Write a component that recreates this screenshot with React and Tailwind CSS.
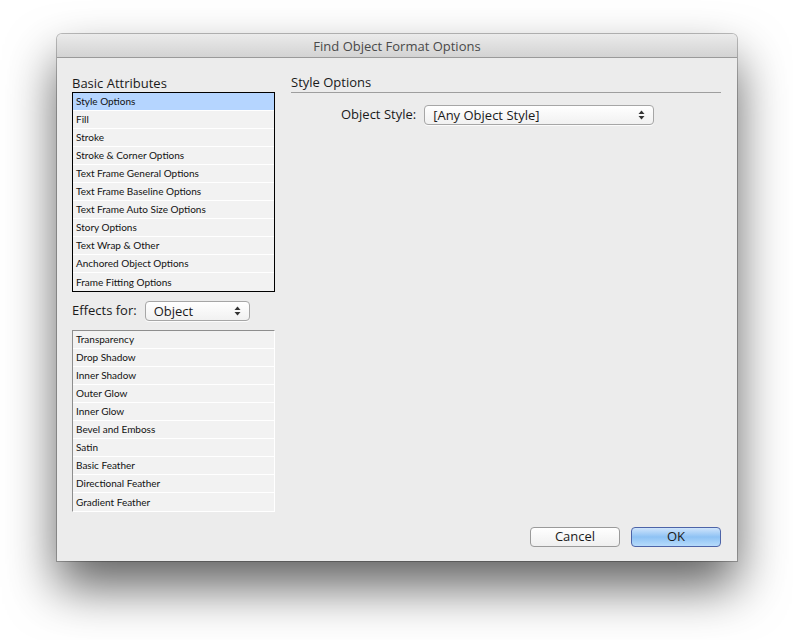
import React from "react";

const basic = [
  "Style Options",
  "Fill",
  "Stroke",
  "Stroke & Corner Options",
  "Text Frame General Options",
  "Text Frame Baseline Options",
  "Text Frame Auto Size Options",
  "Story Options",
  "Text Wrap & Other",
  "Anchored Object Options",
  "Frame Fitting Options",
];

const effects = [
  "Transparency",
  "Drop Shadow",
  "Inner Shadow",
  "Outer Glow",
  "Inner Glow",
  "Bevel and Emboss",
  "Satin",
  "Basic Feather",
  "Directional Feather",
  "Gradient Feather",
];

const big = { fontFamily: "'Open Sans', 'Liberation Sans', sans-serif" };

function Arrows() {
  return (
    <svg width="7" height="10" viewBox="0 0 7 10" className="shrink-0">
      <path d="M3.5 0.5 L6.5 4 L0.5 4 Z" fill="#333" />
      <path d="M3.5 9.5 L6.5 6 L0.5 6 Z" fill="#333" />
    </svg>
  );
}

function Popup({ label, className }) {
  return (
    <div
      className={
        "flex items-center justify-between h-[20px] rounded-[4px] border border-[#a6a6a6] bg-gradient-to-b from-[#ffffff] to-[#f1f1f1] pl-[8px] pr-[8px] text-[13px] text-[#1a1a1a] shadow-[0_1px_0_rgba(255,255,255,0.8)] " +
        className
      }
    >
      <span className="leading-none" style={big}>{label}</span>
      <Arrows />
    </div>
  );
}

export default function App() {
  return (
    <div
      className="w-[793px] h-[640px] bg-white pl-[57px] pt-[34px]"
      style={{ fontFamily: "Lato, 'Liberation Sans', sans-serif" }}
    >
      <div className="w-[680px] h-[527px] flex flex-col rounded-t-[5px] shadow-[0_26px_50px_rgba(0,0,0,0.62),0_0_0_1px_rgba(0,0,0,0.25)] bg-[#ececec]">
        <div
          className="h-[24px] shrink-0 rounded-t-[5px] bg-gradient-to-b from-[#ebebeb] to-[#d3d3d3] border-b border-[#9a9a9a] flex items-center justify-center text-[13px] text-[#4a4a4a] pt-[2px]"
          style={big}
        >
          Find Object Format Options
        </div>
        <div className="flex-1 flex flex-col pl-[15px] pr-[16px] pb-[14px]">
          <div className="flex flex-1 gap-[16px]">
            {/* Left column */}
            <div className="w-[203px] flex flex-col">
              <div className="h-[34px] flex items-end text-[13px] leading-[18px] text-[#1a1a1a]" style={big}>
                Basic Attributes
              </div>
              <div className="border border-black bg-[#f2f2f2]">
                {basic.map((t, i) => (
                  <div
                    key={t}
                    className={
                      "h-[18px] flex items-center pl-[3px] text-[10px] text-[#111] " +
                      (i === 0 ? "bg-[#b5d5ff] " : "") +
                      (i < basic.length - 1 ? "border-b border-white" : "")
                    }
                  >
                    {t}
                  </div>
                ))}
              </div>
              <div className="flex items-center gap-[8px] mt-[9px] text-[13px] text-[#1a1a1a]">
                <span style={big}>Effects for:</span>
                <Popup label="Object" className="w-[105px]" />
              </div>
              <div className="mt-[9px] border-t border-l border-[#8e8e8e] border-r border-r-white border-b border-b-white bg-[#f2f2f2]">
                {effects.map((t, i) => (
                  <div
                    key={t}
                    className={
                      "h-[18px] flex items-center pl-[3px] text-[10px] text-[#111] " +
                      (i < effects.length - 1 ? "border-b border-white" : "")
                    }
                  >
                    {t}
                  </div>
                ))}
              </div>
            </div>
            {/* Right column */}
            <div className="flex-1 flex flex-col">
              <div
                className="h-[35px] flex items-end pb-[1px] text-[13px] leading-[18px] text-[#1a1a1a] border-b border-[#9e9e9e]"
                style={big}
              >
                Style Options
              </div>
              <div className="flex items-center mt-[12px] pl-[50px] gap-[8px] text-[13px] text-[#1a1a1a]">
                <span style={big}>Object Style:</span>
                <Popup label="[Any Object Style]" className="w-[230px]" />
              </div>
            </div>
          </div>
          <div className="flex justify-end gap-[11px]">
            <div
              className="w-[90px] h-[20px] rounded-[4px] border border-[#9a9a9a] bg-gradient-to-b from-[#ffffff] to-[#efefef] flex items-center justify-center text-[13px] text-[#1a1a1a]"
              style={big}
            >
              Cancel
            </div>
            <div
              className="w-[90px] h-[20px] rounded-[4px] border border-[#4d64a8] bg-gradient-to-b from-[#cfe4fb] via-[#8ec2f4] to-[#b6dbfb] flex items-center justify-center text-[13px] text-[#1a1a1a]"
              style={big}
            >
              OK
            </div>
          </div>
        </div>
      </div>
    </div>
  );
}
